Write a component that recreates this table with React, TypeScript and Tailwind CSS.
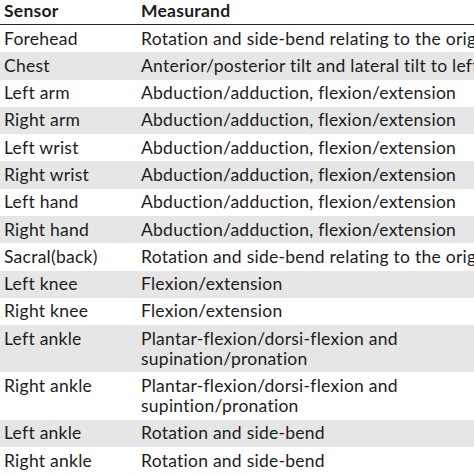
const rows: [string, string[]][] = [
  ['Forehead', ['Rotation and side-bend relating to the original position']],
  ['Chest', ['Anterior/posterior tilt and lateral tilt to left/right']],
  ['Left arm', ['Abduction/adduction, flexion/extension']],
  ['Right arm', ['Abduction/adduction, flexion/extension']],
  ['Left wrist', ['Abduction/adduction, flexion/extension']],
  ['Right wrist', ['Abduction/adduction, flexion/extension']],
  ['Left hand', ['Abduction/adduction, flexion/extension']],
  ['Right hand', ['Abduction/adduction, flexion/extension']],
  ['Sacral(back)', ['Rotation and side-bend relating to the original position']],
  ['Left knee', ['Flexion/extension']],
  ['Right knee', ['Flexion/extension']],
  ['Left ankle', ['Plantar-flexion/dorsi-flexion and', 'supination/pronation']],
  ['Right ankle', ['Plantar-flexion/dorsi-flexion and', 'supintion/pronation']],
  ['Left ankle', ['Rotation and side-bend']],
  ['Right ankle', ['Rotation and side-bend']],
]

export default function App() {
  return (
    <div className="h-[474px] w-[474px] overflow-hidden bg-white text-[#1c1c1c] [font-family:Lato,'Liberation_Sans',sans-serif] text-[17.5px] tracking-[0.25px]">
      <div className="w-[640px]">
        <div className="flex border-b-[1.5px] border-[#222] pt-[1px] pb-[3px] leading-[20px] font-bold">
          <div className="w-[141px] shrink-0 pl-[4px]">Sensor</div>
          <div className="whitespace-nowrap">Measurand</div>
        </div>
        {rows.map(([sensor, lines], i) => (
          <div
            key={i}
            className={`flex py-[3.65px] leading-[20px] ${i % 2 === 1 ? 'bg-[#e6e6e6]' : 'bg-white'}`}
          >
            <div className="w-[141px] shrink-0 pl-[4px] whitespace-nowrap">{sensor}</div>
            <div className="whitespace-nowrap">
              {lines.map((l, j) => (
                <div key={j}>{l}</div>
              ))}
            </div>
          </div>
        ))}
      </div>
    </div>
  )
}
